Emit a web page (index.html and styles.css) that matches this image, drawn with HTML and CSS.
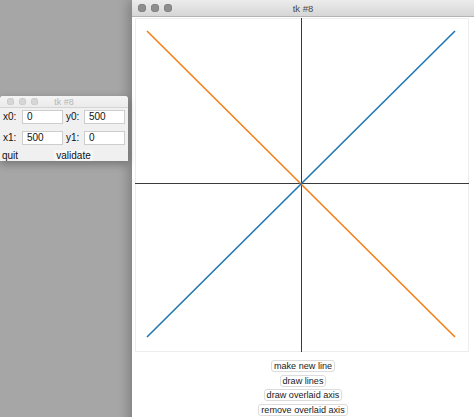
FILE: index.html
```html
<!DOCTYPE html>
<html>
<head>
<meta charset="utf-8">
<link rel="stylesheet" href="styles.css">
</head>
<body>
<div class="desktop">
  <div class="win win-big">
    <div class="titlebar">
      <div class="lights">
        <span class="light"></span><span class="light"></span><span class="light"></span>
      </div>
      <div class="title">tk #8</div>
    </div>
    <div class="content">
      <div class="canvas">
        <svg width="334" height="334" viewBox="0 0 334 334">
          <line x1="166.5" y1="0" x2="166.5" y2="334" stroke="#3a3a3a" stroke-width="1"/>
          <line x1="0" y1="165.5" x2="334" y2="165.5" stroke="#3a3a3a" stroke-width="1"/>
          <line x1="12" y1="13" x2="320" y2="319" stroke="#f57f17" stroke-width="1.6"/>
          <line x1="12" y1="319" x2="320" y2="13" stroke="#1f77b4" stroke-width="1.6"/>
        </svg>
      </div>
      <div class="buttons">
        <span class="btn">make new line</span>
        <span class="btn">draw lines</span>
        <span class="btn">draw overlaid axis</span>
        <span class="btn">remove overlaid axis</span>
      </div>
    </div>
  </div>

  <div class="win win-small">
    <div class="titlebar small">
      <div class="lights">
        <span class="light"></span><span class="light"></span><span class="light"></span>
      </div>
      <div class="title">tk #8</div>
    </div>
    <div class="form">
      <span class="lbl">x0:</span><span class="entry">0</span>
      <span class="lbl lbl2">y0:</span><span class="entry">500</span>
      <span class="lbl">x1:</span><span class="entry">500</span>
      <span class="lbl lbl2">y1:</span><span class="entry">0</span>
      <span class="lbl quit">quit</span><span class="validate">validate</span>
    </div>
  </div>
</div>
</body>
</html>
```

FILE: styles.css
```css
html, body {
  margin: 0;
  padding: 0;
}
body {
  width: 474px;
  height: 417px;
  overflow: hidden;
  background: #a6a6a6;
  font-family: "Liberation Sans", Arial, sans-serif;
}
.desktop {
  position: relative;
  width: 474px;
  height: 417px;
  overflow: hidden;
}
.win {
  position: absolute;
  background: #ffffff;
}
.win-big {
  left: 132px;
  top: 0;
  width: 342px;
  height: 430px;
  box-shadow: -4px 0 10px rgba(0, 0, 0, 0.22);
}
.titlebar {
  position: relative;
  height: 16px;
  background: linear-gradient(#ececec, #d6d6d6);
  border-bottom: 1px solid #b4b4b4;
  display: flex;
  align-items: center;
  justify-content: center;
}
.lights {
  position: absolute;
  left: 6px;
  top: 0;
  height: 100%;
  display: flex;
  align-items: center;
  gap: 5px;
}
.light {
  width: 8px;
  height: 8px;
  border-radius: 50%;
  background: #8e8e8e;
  box-shadow: inset 0 0 0 0.6px #777;
}
.title {
  font-size: 9.5px;
  color: #4a4a4a;
}
.content {
  padding: 1px 0 0 3px;
  display: flex;
  flex-direction: column;
}
.canvas {
  width: 334px;
  height: 334px;
  box-shadow: inset 0 0 0 1px #ededed;
}
.canvas svg {
  display: block;
}
.buttons {
  margin-top: 8px;
  display: flex;
  flex-direction: column;
  align-items: center;
  gap: 2.7px;
  width: 336px;
}
.btn {
  display: block;
  height: 10px;
  line-height: 10px;
  padding: 0 2px;
  font-size: 9.1px;
  color: #1a1a1a;
  background: #fff;
  border: 1px solid #dcdcdc;
  border-radius: 3px;
}

.win-small {
  left: 0;
  top: 96px;
  width: 128px;
  height: 65px;
  background: #f0f0f0;
  box-shadow: 0 3px 8px rgba(0, 0, 0, 0.3);
  border-radius: 3px 3px 0 0;
  overflow: hidden;
}
.titlebar.small {
  height: 11px;
  background: linear-gradient(#f4f4f4, #ebebeb);
  border-bottom: 1px solid #d4d4d4;
  border-radius: 3px 3px 0 0;
}
.titlebar.small .lights {
  left: 7px;
  gap: 5px;
}
.titlebar.small .light {
  width: 7px;
  height: 7px;
  background: #d6d6d6;
  box-shadow: inset 0 0 0 0.6px #c6c6c6;
}
.titlebar.small .title {
  font-size: 9px;
  color: #b6b6b6;
}
.form {
  display: grid;
  grid-template-columns: 19px 41px 21px 41px;
  grid-auto-rows: 14px;
  row-gap: 7px;
  padding: 2px 0 0 3px;
  align-items: center;
  font-size: 10px;
  color: #111;
}
.form .lbl {
  line-height: 14px;
}
.form .lbl2 {
  padding-left: 3px;
}
.entry {
  height: 12px;
  line-height: 12px;
  border: 1px solid #cdcdcd;
  background: #fff;
  padding-left: 4px;
}
.form .quit {
  margin-top: -7px;
  margin-left: -1px;
}
.validate {
  grid-column: 2 / 5;
  justify-self: center;
  margin-top: -7px;
  padding: 0 2px;
  line-height: 11px;
  background: #f7f7f7;
  border-radius: 2px;
}
```
